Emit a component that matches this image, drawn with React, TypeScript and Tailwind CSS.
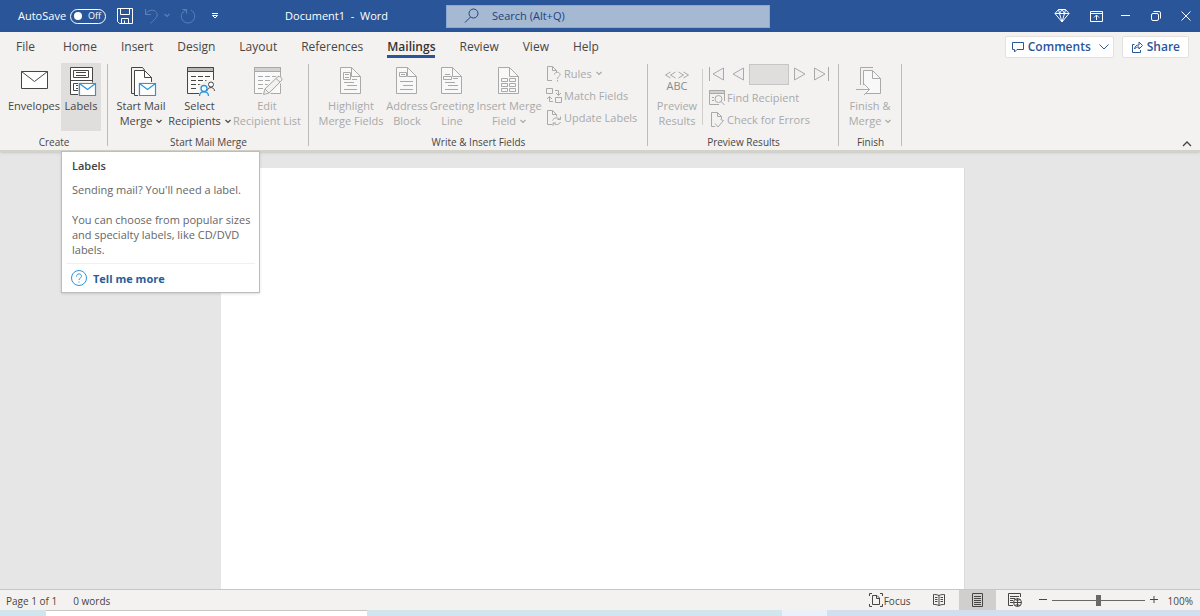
import React from "react";

const TABS = ["File", "Home", "Insert", "Design", "Layout", "References", "Mailings", "Review", "View", "Help"];

type IconProps = { children: React.ReactNode; className?: string; size?: number };

function Icon({ children, className = "", size = 16 }: IconProps) {
    return (
        <svg
            width={size}
            height={size}
            viewBox={`0 0 ${size} ${size}`}
            fill="none"
            stroke="currentColor"
            strokeWidth="1"
            aria-hidden="true"
            className={`shrink-0 ${className}`}
        >
            {children}
        </svg>
    );
}

function Chevron({ className = "" }: { className?: string }) {
    return (
        <svg width="6" height="6" viewBox="0 0 6 6" fill="none" stroke="currentColor" strokeWidth="1.2" aria-hidden="true" className={`inline-block shrink-0 align-middle ${className}`}>
            <path d="M0.5 1L3 3.5L5.5 1" />
        </svg>
    );
}

/* Large 32px ribbon icons */

function EnvelopeIcon() {
    return (
        <Icon size={32}>
            <path d="M3.5 4.5H29.5V21.5H3.5Z" fill="#fff" />
            <path d="M3.5 4.5L16.5 14.5L29.5 4.5" />
        </Icon>
    );
}

function SmallBlueEnvelope() {
    return (
        <g stroke="#2b95dc" strokeWidth="1.2">
            <path d="M14.5 16.5H30.5V28.5H14.5Z" fill="#fff" />
            <path d="M14.5 16.5L22.5 22.5L30.5 16.5" />
        </g>
    );
}

function LabelsIcon() {
    return (
        <Icon size={32}>
            <path d="M5.5 0.5H27.5V27.5H5.5Z" fill="#fff" />
            <path d="M5.5 13.5H27.5M8.5 3.5H23.5V10.5H8.5ZM11 5.5H21M11 8.5H21M8.5 16.5H23.5V23.5H8.5ZM11 18.5H15M11 21.5H15" />
            <path d="M13 15.5H32V30H13Z" fill="#dfdedd" stroke="none" />
            <SmallBlueEnvelope />
        </Icon>
    );
}

function StartMergeIcon() {
    return (
        <Icon size={32}>
            <path d="M9 26.5H6.5V0.5H17.5L19.5 3" />
            <path d="M9.5 29V3.5H19.5L26.5 10.5V28H9.5Z" fill="#fff" stroke="none" />
            <path d="M14 28.5H9.5V3.5H19.5L26.5 10.5V15M19.5 3.5V10.5H26.5" />
            <path d="M13 15H32V30H13Z" fill="#f3f2f1" stroke="none" />
            <SmallBlueEnvelope />
        </Icon>
    );
}

function TableBase({ header }: { header: string }) {
    return (
        <>
            <path d="M3.5 0.5H29.5V26.5H3.5Z" fill="#fafafa" />
            <path d="M3.5 0.5H29.5V4.5H3.5Z" fill={header} />
            <path d="M7 9.5H12M14 9.5H19M21 9.5H26M7 13.5H12M14 13.5H19M21 13.5H26M7 17.5H12M14 17.5H19M7 21.5H12" />
        </>
    );
}

function SelectRecipientsIcon() {
    return (
        <Icon size={32}>
            <TableBase header="#b9b9b9" />
            <path d="M15 18L23 13H32V32H15Z" fill="#f3f2f1" stroke="none" />
            <circle cx="27" cy="17.5" r="2.5" fill="#fff" />
            <path d="M23.5 23.5C23.5 19.5 30.5 19.5 30.5 24" />
            <g stroke="#2b95dc" strokeWidth="1.3">
                <circle cx="20" cy="21.5" r="3" fill="#fff" />
                <path d="M15.5 29C15.5 23.5 24.5 23.5 24.5 29" />
            </g>
        </Icon>
    );
}

function EditListIcon() {
    return (
        <Icon size={32}>
            <TableBase header="#d2d2d2" />
            <path d="M12.5 27.5L14 22L27 9.5L31 13L18 26Z" fill="#f3f2f1" stroke="#f3f2f1" strokeWidth="3" />
            <path d="M12.5 27.5L14 22L27 9.5Q31 9 31 13L18 26ZM14 22L18 26M25 11.5L29 15" />
        </Icon>
    );
}

function PageBase({ children }: { children: React.ReactNode }) {
    return (
        <Icon size={32}>
            <path d="M5.5 0.5H16.5L25.5 9.5V26.5H5.5Z" fill="#f8f8f8" />
            <path d="M16.5 0.5V9.5H25.5" />
            {children}
        </Icon>
    );
}

const HighlightIcon = () => (
    <PageBase>
        <path d="M8.5 5.5H15.5V12.5H8.5ZM10 7.5H14M10 10.5H14M17 12.5H22M9 15.5H19M12 18.5H22M9 22.5H22" />
    </PageBase>
);

const AddressIcon = () => (
    <PageBase>
        <path d="M8.5 5.5H15.5V9.5H8.5ZM10 7.5H14M9 14.5H22M12 18.5H22M9 22.5H22" />
    </PageBase>
);

const GreetingIcon = () => (
    <PageBase>
        <path d="M7.5 9.5H15.5V12.5H7.5ZM9 7.5H14M17 11.5H22M9 15.5H19M12 18.5H22M9 22.5H22" />
    </PageBase>
);

const InsertFieldIcon = () => (
    <PageBase>
        <path d="M8.5 11.5H14.5V14.5H8.5ZM16.5 11.5H22.5V14.5H16.5ZM8.5 16.5H14.5V19.5H8.5ZM16.5 16.5H22.5V19.5H16.5ZM8.5 21.5H14.5V24.5H8.5ZM16.5 21.5H22.5V24.5H16.5Z" />
    </PageBase>
);

function PreviewIcon() {
    return (
        <span className="flex h-8 flex-col items-center text-[11px] leading-3">
            <svg width="26" height="13" viewBox="0 0 26 13" fill="none" stroke="currentColor" aria-hidden="true">
                <path d="M6.5 5L1.5 8L6.5 11M11.5 5L6.5 8L11.5 11M14.5 5L19.5 8L14.5 11M19.5 5L24.5 8L19.5 11" />
            </svg>
            <span className="text-[#8a8a8a]">ABC</span>
        </span>
    );
}

function FinishIcon() {
    return (
        <Icon size={32}>
            <path d="M6.5 18V0.5H19" />
            <path d="M9.5 18V3.5H18.5L26.5 11.5V26.5H12" fill="#f8f8f8" />
            <path d="M18.5 3.5V11.5H26.5M2 22.5H15.5M10 17L15.5 22.5L10 28" />
        </Icon>
    );
}

/* Small 16px ribbon icons */

const SMALL_PAGE = "M6 14.5H1.5V0.5H6.5L10.5 4.5V6.5M6.5 0.5V4.5H10.5";

const RulesIcon = () => (
    <Icon>
        <path d={SMALL_PAGE} />
        <path d="M8.5 8.5C8.5 5.5 14 5.5 14 8.5C14 10.5 11.5 10.5 11.5 13M11.5 14V15.5" />
    </Icon>
);

const MatchIcon = () => (
    <Icon>
        <path d="M0.5 0.5H6.5V5.5H0.5ZM9.5 9.5H15.5V14.5H9.5ZM9 2.5H12.5V7M10 5L12.5 7.5L15 5M7 13.5H3.5V9M1 11L3.5 8.5L6 11" />
    </Icon>
);

const UpdateIcon = () => (
    <Icon>
        <path d={SMALL_PAGE} />
        <path d="M6.5 10.5C7.5 7.5 12 7 14 9.5M14.5 6.5V9.5H11.5M14.5 12C13 15 9.5 15.5 7.5 13M7 16V13H10" />
    </Icon>
);

const FindIcon = () => (
    <Icon>
        <path d="M10 14.5H0.5V0.5H15.5V11" />
        <path d="M0.5 0.5H15.5V3.5H0.5Z" fill="#cfcfcf" />
        <circle cx="9.5" cy="9" r="3.5" />
        <path d="M12 11.5L15.5 15M3 7.5H5M3 10.5H5" />
    </Icon>
);

const CheckIcon = () => (
    <Icon>
        <path d="M6 14.5H2.5V0.5H8.5L12.5 4.5V7M8.5 0.5V4.5H12.5M6 11.5L9 15L14.5 8.5L11.5 7.5" />
    </Icon>
);

type BigButtonProps = {
    icon: React.ReactNode;
    lines: string[];
    width: string;
    menu?: boolean;
    disabled?: boolean;
    active?: boolean;
};

function BigButton({ icon, lines, width, menu, disabled, active }: BigButtonProps) {
    return (
        <button
            type="button"
            disabled={disabled}
            className={`flex h-[68px] shrink-0 flex-col items-center pt-1 text-[11px] leading-[15px] whitespace-nowrap ${width} ${
                disabled ? "text-[#a9a9a9]" : "text-[#484644]"
            } ${active ? "bg-[#dfdedd]" : ""}`}
        >
            {icon}
            <span className="-mt-px flex flex-col items-center">
                {lines.map((line, i) => (
                    <span key={line} className="block">
                        {line}
                        {menu && i === lines.length - 1 ? <Chevron className="ml-1" /> : null}
                    </span>
                ))}
            </span>
        </button>
    );
}

function SmallButton({ icon, label, menu }: { icon: React.ReactNode; label: string; menu?: boolean }) {
    return (
        <button type="button" disabled className="flex h-[22px] items-center gap-0.5 text-[11px] whitespace-nowrap text-[#a9a9a9]">
            {icon}
            {label}
            {menu ? <Chevron className="ml-0.5" /> : null}
        </button>
    );
}

function Group({ label, width, children }: { label: string; width: string; children: React.ReactNode }) {
    return (
        <section aria-label={label} className={`relative flex shrink-0 flex-col pt-[3px] ${width}`}>
            <div className="flex h-[72px] pl-[7px]">{children}</div>
            <div className="text-center text-[10px] leading-4 text-[#484644]">{label}</div>
            <div className="absolute top-1 right-0 bottom-1 w-px bg-[#bebcba]" />
        </section>
    );
}

function NavButton({ label, d }: { label: string; d: string }) {
    return (
        <button type="button" disabled aria-label={label} className="text-[#a9a9a9]">
            <Icon>
                <path d={d} fill="#f0f0f2" />
            </Icon>
        </button>
    );
}

function TitleBar() {
    return (
        <header className="flex h-8 items-center bg-[#2a5699] text-[11px] text-white">
            <div className="flex flex-1 items-center pl-[18px]">
                <label htmlFor="autosave">AutoSave</label>
                <button
                    id="autosave"
                    type="button"
                    role="switch"
                    aria-checked="false"
                    className="ml-1 flex h-[15px] w-9 items-center gap-1.5 rounded-full border border-white pl-[3px] text-[9px]"
                >
                    <span className="size-2 rounded-full bg-white" />
                    Off
                </button>
                <button type="button" aria-label="Save" className="ml-[11px]">
                    <Icon>
                        <path d="M0.5 0.5H15.5V15.5H2.5L0.5 13.5ZM3.5 0.5V6.5H12.5V0.5M4.5 15.5V10.5H11.5V15.5M7.5 12.5V15" />
                    </Icon>
                </button>
                <button type="button" disabled aria-label="Undo" className="ml-[11px] flex items-center gap-1 text-[#5b80b8]">
                    <Icon>
                        <path d="M1.5 1V6.5H7M1.5 6.5C4 1.5 10 1 12.5 4.5C14.5 8 12 10 6.5 15.5" />
                    </Icon>
                    <Chevron />
                </button>
                <button type="button" disabled aria-label="Redo" className="ml-2.5 text-[#5b80b8]">
                    <Icon>
                        <path d="M2.5 1.5H6.5V5.5M6 2C1.5 4 0 8.5 2.5 12C5 16 11 16 13.5 12C16 8.5 14.5 4 11 2" />
                    </Icon>
                </button>
                <button type="button" aria-label="Customize Quick Access Toolbar" className="ml-[15px]">
                    <svg width="8" height="8" viewBox="0 0 8 8" fill="none" stroke="currentColor" aria-hidden="true">
                        <path d="M1 1.5H7M1.5 3.5L4 6L6.5 3.5Z" />
                    </svg>
                </button>
                <h1 className="mr-[54px] ml-auto whitespace-pre">Document1  -  Word</h1>
            </div>
            <label className="ml-1 flex h-[23px] w-[324px] items-center border border-[#8ba9d0] bg-[#a5b9d3] pl-[17px] text-[#1f4280]">
                <Icon>
                    <circle cx="9.5" cy="5.5" r="4.5" />
                    <path d="M6.5 9L1 14.5" />
                </Icon>
                <input
                    type="text"
                    aria-label="Search"
                    placeholder="Search (Alt+Q)"
                    className="ml-3 flex-1 bg-transparent text-[11px] outline-none placeholder:text-[#1f4280]"
                />
            </label>
            <div className="flex flex-1 items-center justify-end pr-1.5">
                <button type="button" aria-label="Premium" className="mr-[18px]">
                    <Icon>
                        <path d="M4.5 1.5H11.5L15 5.5L8 14L1 5.5ZM1 5.5H15M4.5 1.5L5.5 5.5L8 14L10.5 5.5L11.5 1.5M5.5 5.5L8 1.5L10.5 5.5" />
                    </Icon>
                </button>
                <button type="button" aria-label="Ribbon Display Options" className="mr-3.5">
                    <Icon>
                        <path d="M2.5 3.5H14.5V13.5H2.5ZM2.5 5.5H14.5M8.5 12V7M6 9.5L8.5 7L11 9.5" />
                    </Icon>
                </button>
                <button type="button" aria-label="Minimize" className="mr-3.5">
                    <Icon>
                        <path d="M3 7.5H12" />
                    </Icon>
                </button>
                <button type="button" aria-label="Restore" className="mr-3.5">
                    <Icon>
                        <rect x="3.5" y="5.5" width="7" height="7" rx="1.5" />
                        <path d="M5.5 3.5H11Q12.5 3.5 12.5 5V10.5" />
                    </Icon>
                </button>
                <button type="button" aria-label="Close">
                    <Icon>
                        <path d="M3.5 3.5L12.5 12.5M12.5 3.5L3.5 12.5" />
                    </Icon>
                </button>
            </div>
        </header>
    );
}

function tabClasses(tab: string): string {
    if (tab === "Mailings") return "border-[#2a5699] font-semibold text-[#333]";
    if (tab === "File") return "mr-1 border-transparent";
    return "border-transparent";
}

function TabRow() {
    return (
        <div className="flex h-7 items-center pr-[11px] pl-4">
            <nav aria-label="Ribbon tabs" className="flex h-full flex-1 gap-6 text-[12px] text-[#484644]">
                {TABS.map(tab => (
                    <button key={tab} type="button" className={`mt-1.5 mb-0.5 border-b-3 ${tabClasses(tab)}`}>
                        {tab}
                    </button>
                ))}
            </nav>
            <button type="button" className="mt-0.5 flex h-[22px] items-center gap-1 rounded-xs border border-[#e3e1df] bg-white px-1 text-[12px] font-semibold text-[#2a5699]">
                <Icon size={12} className="ml-0.5">
                    <path d="M0.5 1.5H11.5V8.5H5L2.5 11V8.5H0.5Z" />
                </Icon>
                Comments
                <svg width="10" height="6" viewBox="0 0 10 6" fill="none" stroke="currentColor" aria-hidden="true" className="ml-1">
                    <path d="M0.5 0.5L5 5L9.5 0.5" />
                </svg>
            </button>
            <button type="button" className="mt-0.5 ml-2 flex h-[22px] items-center gap-1 rounded-xs border border-[#e3e1df] bg-white px-2 text-[12px] font-semibold text-[#2a5699]">
                <Icon size={12}>
                    <path d="M3.5 3.5H1.5V11.5H9.5V9M3.5 8C4 5 5.5 4 8 4V1L11.5 4.5L8 8V6C6 6 4.5 6.5 3.5 8Z" />
                </Icon>
                Share
            </button>
        </div>
    );
}

function LabelsTooltip() {
    return (
        <div
            role="tooltip"
            className="absolute top-[88px] left-0 z-10 w-[199px] border border-[#bdbdbd] bg-white text-left text-[11px] leading-[15px] text-[#666] shadow-sm"
        >
            <div className="py-1.5 pr-1 pl-2.5">
                <h2 className="font-semibold text-[#444]">Labels</h2>
                <p className="mt-[9px]">Sending mail? You'll need a label.</p>
                <p className="mt-[15px]">You can choose from popular sizes and specialty labels, like CD/DVD labels.</p>
            </div>
            <div className="mx-1 border-t border-[#f0f0f0]" />
            <a href="#labels-help" className="flex h-7 items-center gap-1.5 px-[9px] font-bold text-[#2a5c99]">
                <Icon className="text-[#2b95dc]">
                    <circle cx="8" cy="8" r="7.5" />
                    <path d="M5.5 6.5C5.5 3 10.5 3 10.5 6.5C10.5 8 8 8 8 10M8 11.5V12.5" />
                </Icon>
                Tell me more
            </a>
        </div>
    );
}

function Ribbon() {
    return (
        <div className="flex h-[90px]">
            <Group label="Create" width="w-[108px]">
                <BigButton icon={<EnvelopeIcon />} lines={["Envelopes"]} width="w-[54px]" />
                <div className="relative">
                    <BigButton icon={<LabelsIcon />} lines={["Labels"]} width="w-10" active />
                    <LabelsTooltip />
                </div>
            </Group>
            <Group label="Start Mail Merge" width="w-[201px]">
                <BigButton icon={<StartMergeIcon />} lines={["Start Mail", "Merge"]} width="w-[52px]" menu />
                <BigButton icon={<SelectRecipientsIcon />} lines={["Select", "Recipients"]} width="w-[65px]" menu />
                <BigButton icon={<EditListIcon />} lines={["Edit", "Recipient List"]} width="w-[70px]" disabled />
            </Group>
            <Group label="Write & Insert Fields" width="w-[339px]">
                <BigButton icon={<HighlightIcon />} lines={["Highlight", "Merge Fields"]} width="w-[70px]" disabled />
                <BigButton icon={<AddressIcon />} lines={["Address", "Block"]} width="w-[42px]" disabled />
                <BigButton icon={<GreetingIcon />} lines={["Greeting", "Line"]} width="w-12" disabled />
                <BigButton icon={<InsertFieldIcon />} lines={["Insert Merge", "Field"]} width="w-[66px]" menu disabled />
                <div className="ml-1 flex flex-col">
                    <SmallButton icon={<RulesIcon />} label="Rules" menu />
                    <SmallButton icon={<MatchIcon />} label="Match Fields" />
                    <SmallButton icon={<UpdateIcon />} label="Update Labels" />
                </div>
            </Group>
            <Group label="Preview Results" width="w-[191px]">
                <BigButton icon={<PreviewIcon />} lines={["Preview", "Results"]} width="w-11" disabled />
                <div className="mt-1.5 ml-[3px] h-14 w-px bg-[#d0cecc]" />
                <div className="ml-1.5 flex flex-col">
                    <div className="flex h-[22px] items-center gap-1">
                        <NavButton label="First record" d="M0.5 1V15M14.5 2V14L4 8Z" />
                        <NavButton label="Previous record" d="M14.5 2V14L4 8Z" />
                        <input type="text" disabled aria-label="Record" className="h-[21px] w-10 border border-[#c6c6c6] bg-[#dfdedd]" />
                        <NavButton label="Next record" d="M1.5 2V14L12 8Z" />
                        <NavButton label="Last record" d="M1.5 2V14L12 8ZM15.5 1V15" />
                    </div>
                    <div className="mt-0.5">
                        <SmallButton icon={<FindIcon />} label="Find Recipient" />
                        <SmallButton icon={<CheckIcon />} label="Check for Errors" />
                    </div>
                </div>
            </Group>
            <Group label="Finish" width="w-[63px]">
                <BigButton icon={<FinishIcon />} lines={["Finish &", "Merge"]} width="w-12" menu disabled />
            </Group>
            <button type="button" aria-label="Collapse the Ribbon" className="mt-auto mr-2 mb-[3px] ml-auto text-[#444]">
                <svg width="10" height="6" viewBox="0 0 10 6" fill="none" stroke="currentColor" strokeWidth="1.3" aria-hidden="true">
                    <path d="M1 5L5 1L9 5" />
                </svg>
            </button>
        </div>
    );
}

function StatusBar() {
    return (
        <footer className="flex h-[21px] items-center border-t border-[#c8c6c4] bg-[#f3f2f1] pr-[7px] pl-1.5 text-[10px] text-[#484644]">
            <span className="pt-0.5">Page 1 of 1</span>
            <span className="ml-4 pt-0.5">0 words</span>
            <button type="button" className="ml-auto flex items-center">
                <Icon>
                    <path d="M4 1.5H1.5V4M12 1.5H14.5V4M4 14.5H1.5V12M12 14.5H14.5V12M4.5 3.5H9L11.5 6V12.5H4.5ZM8.5 3.5V6.5H11.5" />
                </Icon>
                <span className="pt-0.5">Focus</span>
            </button>
            <button type="button" aria-label="Read Mode" className="ml-5">
                <Icon>
                    <path d="M8 3.5C6 2.5 4 2.5 2.5 2.5V12.5C4 12.5 6 12.5 8 13.5C10 12.5 12 12.5 13.5 12.5V2.5C12 2.5 10 2.5 8 3.5ZM8 3.5V13.5M4 5.5H6.5M4 7.5H6.5M4 9.5H6.5M9.5 5.5H12M9.5 7.5H12M9.5 9.5H12" />
                </Icon>
            </button>
            <button type="button" aria-label="Print Layout" className="ml-3 flex h-5 w-[37px] items-center justify-center bg-[#d0cfcd]">
                <Icon>
                    <path d="M3.5 1.5H13.5V14.5H3.5ZM5 4.5H12M5 6.5H12M5 8.5H12M5 10.5H12M5 12.5H12" />
                </Icon>
            </button>
            <button type="button" aria-label="Web Layout" className="ml-[11px]">
                <Icon>
                    <path d="M6 13.5H1.5V1.5H13.5V5M3 4.5H12M3 6.5H8M3 8.5H6M3 10.5H6" />
                    <circle cx="10.5" cy="10.5" r="4" />
                    <path d="M6.5 10.5H14.5M10.5 6.5V14.5M8 7.5Q10.5 9.5 13 7.5M8 13.5Q10.5 11.5 13 13.5" />
                </Icon>
            </button>
            <button type="button" aria-label="Zoom out" className="ml-4">
                <Icon size={8}>
                    <path d="M0 3.5H8" />
                </Icon>
            </button>
            <input
                type="range"
                aria-label="Zoom"
                min={10}
                max={190}
                defaultValue={100}
                className="mx-[5px] h-3 w-[93px] appearance-none bg-[linear-gradient(#6a6866,#6a6866)] bg-[length:100%_1px] bg-center bg-no-repeat [&::-webkit-slider-thumb]:h-[11px] [&::-webkit-slider-thumb]:w-[5px] [&::-webkit-slider-thumb]:appearance-none [&::-webkit-slider-thumb]:bg-[#6a6866]"
            />
            <button type="button" aria-label="Zoom in">
                <Icon size={8}>
                    <path d="M0 3.5H8M4 0V7" />
                </Icon>
            </button>
            <span className="ml-2.5 pt-0.5">100%</span>
        </footer>
    );
}

export default function App() {
    return (
        <div className="flex min-h-screen min-w-[1000px] flex-col bg-[#e6e6e6] font-['Open_Sans','Noto_Sans',sans-serif]">
            <TitleBar />
            <div className="border-b-2 border-[#d3d3c6] bg-[#f3f2f1] shadow-sm">
                <TabRow />
                <Ribbon />
            </div>
            <main className="flex flex-1 pt-4 pr-[15px]">
                <div role="textbox" aria-label="Document" className="mx-auto w-[744px] border-r border-[#dadada] bg-white" />
            </main>
            <StatusBar />
            <div className="flex h-1.5 bg-[#d0e6ec]">
                <div className="ml-[46px] w-[321px] border-t border-[#c8c6c4] bg-white" />
                <div className="ml-auto w-[45px] bg-[#eaf1f8]" />
                <div className="w-[373px] bg-[#d2dfef]" />
            </div>
        </div>
    );
}
